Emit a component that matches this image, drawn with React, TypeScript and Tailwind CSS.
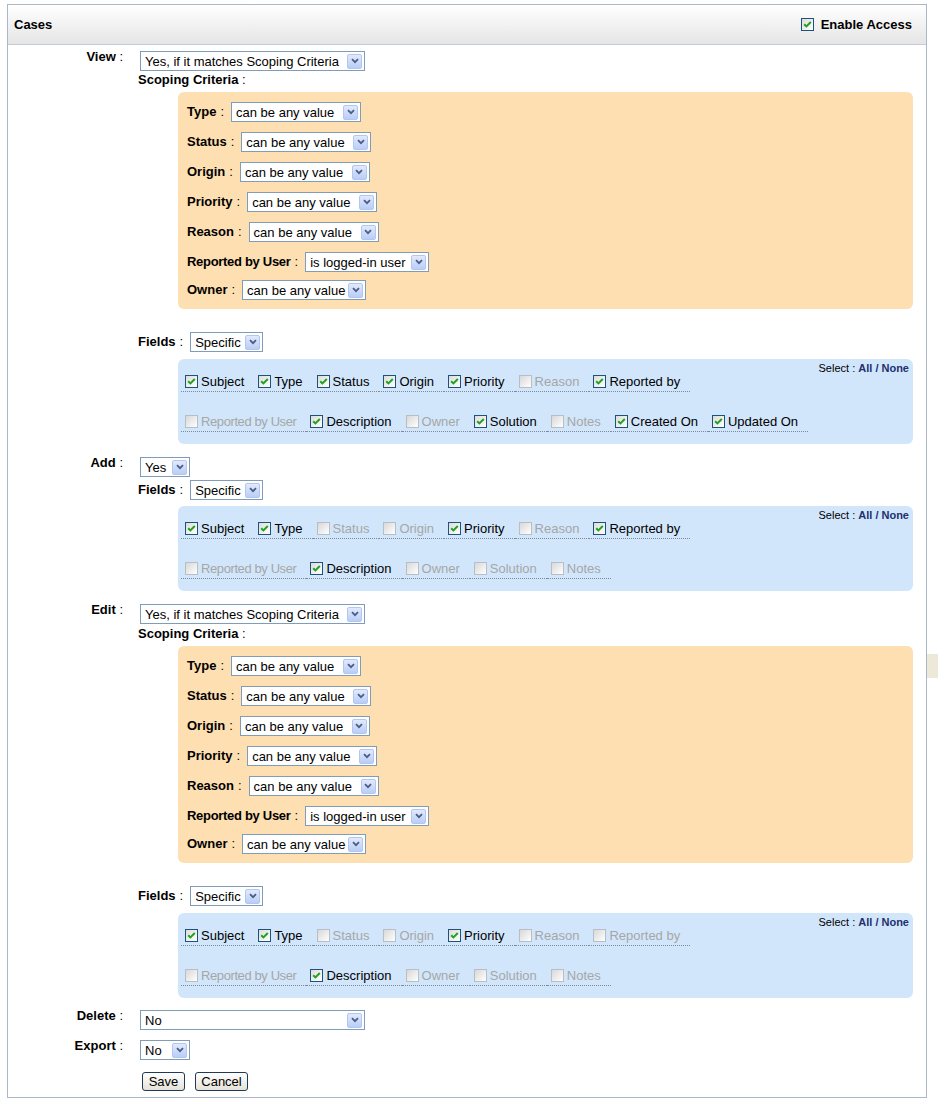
import React from "react";

const Arrow = () => (
  <span className="ml-auto mr-[2px] flex h-[15px] w-[15px] shrink-0 items-center justify-center rounded-[2px] border border-[#b3c6ef] bg-gradient-to-b from-[#e2eafc] to-[#b9cdf6]">
    <svg width="8" height="6" viewBox="0 0 8 6">
      <path d="M1 1.2 L4 4.2 L7 1.2" fill="none" stroke="#4a5d87" strokeWidth="1.8" />
    </svg>
  </span>
);

function Sel({ wc, text, className = "" }: { wc: string; text: string; className?: string }) {
  return (
    <div
      className={`flex h-[20px] shrink-0 items-center border border-[#7f9db9] bg-white pl-[4px] text-[13px] leading-none ${wc} ${className}`}
    >
      <span className="whitespace-nowrap">{text}</span>
      <Arrow />
    </div>
  );
}

function Box({ checked }: { checked: boolean }) {
  return checked ? (
    <span className="flex h-[13px] w-[13px] shrink-0 items-center justify-center border border-[#1c5180] bg-gradient-to-br from-[#dcdcd7] to-white">
      <svg width="9" height="9" viewBox="0 0 9 9">
        <path d="M1.2 4.2 L3.4 6.4 L7.8 2" fill="none" stroke="#21a121" strokeWidth="2" />
      </svg>
    </span>
  ) : (
    <span className="h-[13px] w-[13px] shrink-0 border border-[#b9bec4] bg-gradient-to-br from-[#d8d8d8] to-white" />
  );
}

type F = [string, boolean];

function Item({ label, on }: { label: string; on: boolean }) {
  const tight = label === "Reported by User";
  return (
    <div className="flex h-[20px] items-center border-b border-dotted border-[#7b8999] pl-[4px] pr-[10px]">
      <Box checked={on} />
      <span
        className={`ml-[3px] whitespace-nowrap text-[13px] leading-none ${on ? "text-black" : "text-[#a6a6a6]"} ${tight ? "tracking-[-0.4px]" : ""}`}
      >
        {label}
      </span>
    </div>
  );
}

function FieldsBox({ rows }: { rows: F[][] }) {
  return (
    <div className="ml-[40px] flex w-[735px] rounded-[6px] bg-[#d1e6fb]">
      <div className="flex flex-1 flex-col gap-[20px] pb-[12px] pl-[3px] pt-[13px]">
        {rows.map((r, i) => (
          <div key={i} className="flex">
            {r.map(([l, on]) => (
              <Item key={l} label={l} on={on} />
            ))}
          </div>
        ))}
      </div>
      <div className="shrink-0 whitespace-nowrap pr-[4px] pt-[3px] text-[11px] leading-[13px]">
        Select : <b className="text-[#22306e]">All / None</b>
      </div>
    </div>
  );
}

function Crit({ label, text, wc, className = "" }: { label: string; text: string; wc: string; className?: string }) {
  const tight = label === "Reported by User";
  return (
    <div className={`flex h-[20px] items-center text-[13px] ${className}`}>
      <b className={tight ? "tracking-[-0.3px]" : ""}>{label}</b>
      <span className="ml-[4px] mr-[7px]">:</span>
      <Sel wc={wc} text={text} />
    </div>
  );
}

function Criteria() {
  const any = "can be any value";
  return (
    <div className="ml-[40px] mt-[5px] flex w-[735px] flex-col gap-[10px] rounded-[6px] bg-[#fddfb1] pb-[9px] pl-[9px] pt-[10px]">
      <Crit label="Type" text={any} wc="w-[130px]" />
      <Crit label="Status" text={any} wc="w-[130px]" />
      <Crit label="Origin" text={any} wc="w-[130px]" />
      <Crit label="Priority" text={any} wc="w-[130px]" />
      <Crit label="Reason" text={any} wc="w-[130px]" />
      <Crit label="Reported by User" text="is logged-in user" wc="w-[124px]" />
      <Crit label="Owner" text={any} wc="w-[124px]" className="-mt-[2px]" />
    </div>
  );
}

function FieldsRow({ className = "" }: { className?: string }) {
  return (
    <div className={`flex h-[20px] items-center text-[13px] ${className}`}>
      <b>Fields</b>
      <span className="ml-[4px] mr-[7px]">:</span>
      <Sel wc="w-[73px]" text="Specific" />
    </div>
  );
}

function Section({ label, children, className = "" }: { label: string; children: React.ReactNode; className?: string }) {
  return (
    <div className={`flex ${className}`}>
      <div className="-mt-[2px] w-[115px] shrink-0 text-right text-[13px] leading-[15px]">
        <b>{label}</b> :
      </div>
      <div className="ml-[15px] flex flex-col">{children}</div>
    </div>
  );
}

const viewRows: F[][] = [
  [
    ["Subject", true],
    ["Type", true],
    ["Status", true],
    ["Origin", true],
    ["Priority", true],
    ["Reason", false],
    ["Reported by", true],
  ],
  [
    ["Reported by User", false],
    ["Description", true],
    ["Owner", false],
    ["Solution", true],
    ["Notes", false],
    ["Created On", true],
    ["Updated On", true],
  ],
];

const addRows: F[][] = [
  [
    ["Subject", true],
    ["Type", true],
    ["Status", false],
    ["Origin", false],
    ["Priority", true],
    ["Reason", false],
    ["Reported by", true],
  ],
  [
    ["Reported by User", false],
    ["Description", true],
    ["Owner", false],
    ["Solution", false],
    ["Notes", false],
  ],
];

const editRows: F[][] = [
  [
    ["Subject", true],
    ["Type", true],
    ["Status", false],
    ["Origin", false],
    ["Priority", true],
    ["Reason", false],
    ["Reported by", false],
  ],
  [
    ["Reported by User", false],
    ["Description", true],
    ["Owner", false],
    ["Solution", false],
    ["Notes", false],
  ],
];

export default function App() {
  return (
    <div className="relative h-[1108px] w-[938px] overflow-hidden bg-white font-['Liberation_Sans',Arial,sans-serif] text-black">
      <div className="pl-[7px] pt-[4px]">
        <div className="w-[920px] border border-[#a9b8c6]">
          <div className="flex h-[40px] items-center justify-between border-b border-[#c4ccd5] bg-gradient-to-b from-white to-[#e5e5e5] pl-[6px] pr-[14px]">
            <span className="text-[13px] font-bold">Cases</span>
            <div className="flex items-center">
              <Box checked />
              <span className="ml-[7px] text-[13px] font-bold">Enable Access</span>
            </div>
          </div>

          <div className="pb-[6px] pt-[6px]">
            <Section label="View">
              <Sel wc="w-[225px]" text="Yes, if it matches Scoping Criteria" className="ml-[2px]" />
              <div className="mt-[2px] text-[13px] leading-[14px]">
                <b>Scoping Criteria</b> :
              </div>
              <Criteria />
              <FieldsRow className="mt-[23px]" />
              <div className="mt-[7px]">
                <FieldsBox rows={viewRows} />
              </div>
            </Section>

            <Section label="Add" className="mt-[13px]">
              <Sel wc="w-[50px]" text="Yes" className="ml-[2px]" />
              <FieldsRow className="mt-[3px]" />
              <div className="mt-[6px]">
                <FieldsBox rows={addRows} />
              </div>
            </Section>

            <Section label="Edit" className="mt-[13px]">
              <Sel wc="w-[225px]" text="Yes, if it matches Scoping Criteria" className="ml-[2px]" />
              <div className="mt-[3px] text-[13px] leading-[14px]">
                <b>Scoping Criteria</b> :
              </div>
              <Criteria />
              <FieldsRow className="mt-[23px]" />
              <div className="mt-[7px]">
                <FieldsBox rows={editRows} />
              </div>
            </Section>

            <Section label="Delete" className="mt-[12px]">
              <Sel wc="w-[225px]" text="No" className="ml-[2px]" />
            </Section>

            <Section label="Export" className="mt-[10px]">
              <Sel wc="w-[50px]" text="No" className="ml-[2px]" />
            </Section>

            <div className="ml-[134px] mt-[12px] flex gap-[10px]">
              <button className="flex h-[19px] w-[43px] items-center justify-center rounded-[3px] border border-[#1f3a5a] bg-gradient-to-b from-white to-[#e4e2d8] text-[13px] leading-none">
                Save
              </button>
              <button className="flex h-[19px] w-[53px] items-center justify-center rounded-[3px] border border-[#1f3a5a] bg-gradient-to-b from-white to-[#e4e2d8] text-[13px] leading-none">
                Cancel
              </button>
            </div>
          </div>
        </div>
      </div>
      <div className="absolute left-[927px] top-[654px] h-[24px] w-[11px] bg-[#ece9d8]" />
    </div>
  );
}
